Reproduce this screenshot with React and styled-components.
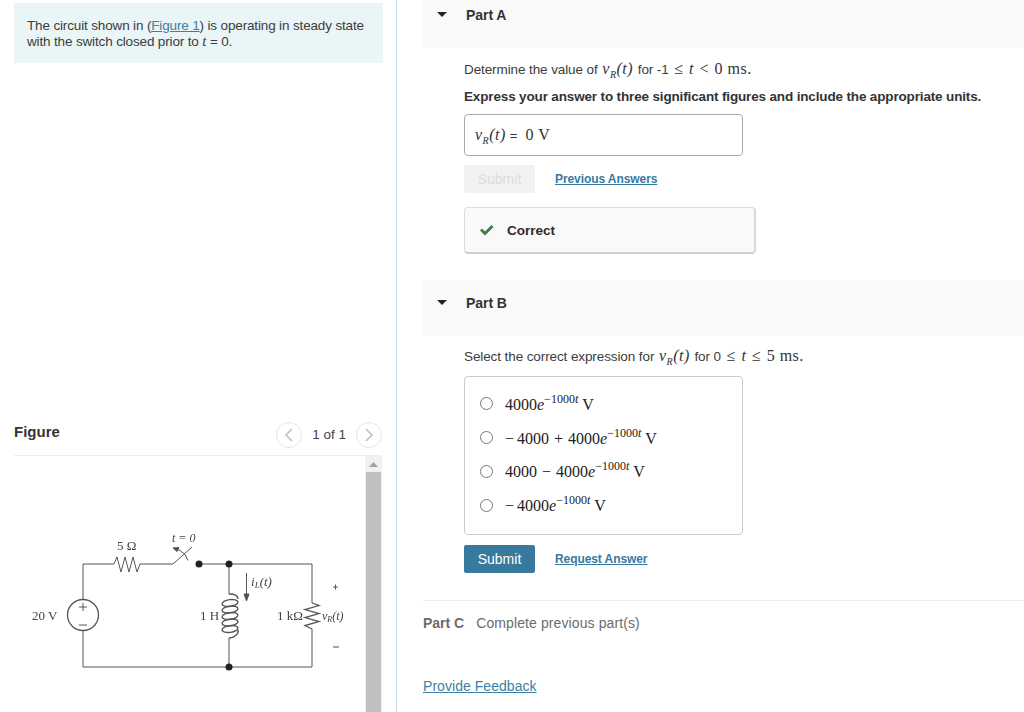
import React from 'react';
import styled, { createGlobalStyle } from 'styled-components';

const GlobalStyle = createGlobalStyle`
  html, body {
    margin: 0;
    padding: 0;
    background: #fff;
    height: 712px;
    overflow: hidden;
    font-family: "Liberation Sans", Arial, sans-serif;
    font-size: 14px;
    color: #333;
  }
`;

const Page = styled.div`
  display: grid;
  grid-template-columns: 397px 1fr;
  width: 1024px;
  height: 712px;
  overflow: hidden;
`;

const LeftPane = styled.div`
  border-right: 1px solid #c4d4e4;
  padding: 3px 14px 0 14px;
  box-sizing: border-box;
  height: 712px;
  overflow: hidden;
`;

const Intro = styled.div`
  background: #e9f5f6;
  height: 60px;
  width: 369px;
  box-sizing: border-box;
  padding: 14px 13px 0;
  line-height: 16px;
  font-size: 13.5px;
  letter-spacing: -0.15px;
  color: #3c3c3c;
  border-top: 1px solid #eef2f3;
`;

const FigureLink = styled.a`
  color: #3d7fa3;
  text-decoration: underline;
`;

const Ital = styled.i`
  font-family: "Liberation Serif", serif;
  font-size: 15px;
  line-height: 0;
`;

const FigureHead = styled.div`
  display: flex;
  align-items: center;
  justify-content: space-between;
  margin-top: 353px;
  height: 39px;
  border-bottom: 1px solid #eee;
`;

const FigureTitle = styled.div`
  font-weight: 700;
  font-size: 15px;
  color: #333;
  margin-bottom: 8px;
`;

const Pager = styled.div`
  display: flex;
  align-items: center;
  gap: 10px;
  margin-bottom: 2px;
`;

const PagerBtn = styled.span`
  width: 26px;
  height: 26px;
  border-radius: 50%;
  border: 1px solid #e6e6e6;
  display: flex;
  align-items: center;
  justify-content: center;
  box-sizing: border-box;
`;

const PagerText = styled.span`
  font-size: 13.5px;
  color: #444;
`;

const FigureBody = styled.div`
  display: flex;
  height: 256px;
`;

const CircuitWrap = styled.div`
  flex: 1;
  padding-top: 75px;
  filter: blur(0.4px);
`;

const Scrollbar = styled.div`
  width: 17px;
  background: #f1f1f1;
  display: flex;
  flex-direction: column;
  align-items: center;
`;

const ScrollArrow = styled.div`
  height: 16px;
  display: flex;
  align-items: center;
  justify-content: center;
`;

const ScrollThumb = styled.div`
  width: 15px;
  flex: 1;
  background: #bfbfbf;
`;

const RightPane = styled.div`
  padding-left: 26px;
  overflow: hidden;
`;

const PartHead = styled.div`
  display: flex;
  align-items: flex-start;
  background: #f9f9f9;
  height: ${p => p.$h}px;
  box-sizing: border-box;
  padding: ${p => p.$pt}px 0 0 14px;
  margin-top: ${p => p.$mt || 0}px;
  font-weight: 700;
  font-size: 14px;
  letter-spacing: -0.05px;
  color: #333;
  gap: 19px;
`;

const Caret = styled.span`
  width: 0;
  height: 0;
  border-left: 5px solid transparent;
  border-right: 5px solid transparent;
  border-top: 5px solid #222;
  margin-top: 5px;
`;

const PartBody = styled.div`
  padding-left: 41px;
`;

const Prompt = styled.div`
  font-size: 13.5px;
  line-height: 18px;
  color: #3c3c3c;
  margin-top: ${p => p.$mt}px;
  letter-spacing: -0.1px;
`;

const Instruction = styled.div`
  font-weight: 700;
  font-size: 13.5px;
  line-height: 18px;
  color: #333;
  margin-top: 9px;
  letter-spacing: -0.15px;
`;

const MathText = styled.span`
  font-family: "Liberation Serif", serif;
  font-size: 16px;
  color: #333;
  letter-spacing: 0.5px;
  margin: 0 1px;
`;

const MathVar = styled.i`
  font-family: "Liberation Serif", serif;
`;

const RelOp = styled.span`
  margin: 0 1px;
`;

const Sub = styled.sub`
  font-size: 10px;
  font-style: italic;
  line-height: 0;
`;

const Sup = styled.sup`
  font-size: 12px;
  font-style: normal;
  line-height: 0;
  vertical-align: 7px;
  margin-right: 4px;
`;

const Op = styled.span`
  margin: 0 5px;
`;

const Minus = styled.span`
  margin-right: 3px;
`;

const AnswerBox = styled.div`
  width: 279px;
  height: 42px;
  box-sizing: border-box;
  margin-top: 8px;
  border: 1px solid #aaa;
  border-radius: 4px;
  display: flex;
  align-items: center;
  padding-left: 9px;
  gap: 3px;
`;

const Eq = styled.span`
  font-size: 13px;
  margin-right: 4px;
`;

const ActionRow = styled.div`
  display: flex;
  align-items: center;
  gap: 20px;
  margin-top: ${p => p.$mt}px;
`;

const SubmitBtn = styled.button`
  border: 0;
  border-radius: 2px;
  font-family: inherit;
  font-size: 14px;
  height: 28px;
  width: 71px;
  padding: 0;
  background: ${p => (p.$active ? '#387a9e' : '#f2f2f2')};
  color: ${p => (p.$active ? '#fff' : '#dcdcdc')};
`;

const ActionLink = styled.a`
  font-weight: 700;
  font-size: 12px;
  letter-spacing: -0.08px;
  color: #38799f;
  text-decoration: underline;
`;

const Feedback = styled.div`
  width: 292px;
  height: 47px;
  box-sizing: border-box;
  margin-top: 14px;
  border: 1px solid #ddd;
  border-bottom: 2px solid #cfcfcf;
  border-right: 2px solid #d8d8d8;
  border-radius: 4px;
  background: #f9f9f9;
  display: flex;
  align-items: center;
  padding-left: 14px;
  gap: 13px;
  font-weight: 700;
  font-size: 13.5px;
  color: #2c2c2c;
`;

const ChoiceBox = styled.div`
  width: 279px;
  height: 159px;
  box-sizing: border-box;
  margin-top: 10px;
  border: 1px solid #ccc;
  border-radius: 4px;
  padding-top: 11px;
`;

const Choice = styled.div`
  display: flex;
  align-items: center;
  height: 33.8px;
  padding-left: 15px;
  gap: 12px;
`;

const Radio = styled.span`
  width: 13px;
  height: 13px;
  box-sizing: border-box;
  border: 1.5px solid #777;
  border-radius: 50%;
  flex: none;
  background: #fff;
  position: relative;
  top: -1px;
`;

const ChoiceMath = styled.span`
  font-family: "Liberation Serif", serif;
  font-size: 16px;
  color: #222;
`;

const PartC = styled.div`
  border-top: 1px solid #eee;
  margin-top: 27px;
  height: 44px;
  display: flex;
  align-items: center;
  gap: 12px;
  font-size: 14px;
  letter-spacing: 0.1px;
  color: #6c6c6c;
`;

const PartCLabel = styled.b`
  font-size: 14px;
  letter-spacing: 0;
`;

const ProvideLink = styled.a`
  display: inline-block;
  margin-top: 33px;
  color: #3d7fa3;
  font-size: 14px;
  letter-spacing: 0.05px;
  text-decoration: underline;
`;

const Circuit = () => (
  <svg width="351" height="140" viewBox="14 530 351 140" fill="none" style={{ display: 'block', overflow: 'visible' }}>
    <g stroke="#555" strokeWidth="1">
      <path d="M83 598V563H114l3-7 4 15 4-15 4 15 4-15 4 15 3-8H173l19-17M199 563H312V602M83 630V666H312V628" />
      <path d="M229 563V593M229 637V666" />
      <path d="M312 602l7 2.5-14 4 14 4-14 4 14 4-14 4 7 3.5" strokeWidth="1.3" />
      <path d="M173 547l7 2.5 5 4 3 6" />
      <path d="M173 547l6-.5-2 4z" fill="#555" />
      <path d="M246.500 572V598" />
      <path d="M244 593l2.500 7 2.500-7z" fill="#555" />
      <g strokeWidth="1.4">
        <path d="M229 593c5 0 9 1 9 5" />
        <ellipse cx="230" cy="602" rx="8" ry="3.4" transform="rotate(-8 230 602)" />
        <ellipse cx="230" cy="608.500" rx="8" ry="3.4" transform="rotate(-8 230 608.500)" />
        <ellipse cx="230" cy="615" rx="8" ry="3.4" transform="rotate(-8 230 615)" />
        <ellipse cx="230" cy="621.500" rx="8" ry="3.4" transform="rotate(-8 230 621.500)" />
        <ellipse cx="230" cy="628" rx="8" ry="3.4" transform="rotate(-8 230 628)" />
        <path d="M238 629c1 4-4 8-9 8" />
      </g>
      <circle cx="83" cy="614" r="15.500" strokeWidth="1.3" fill="#fff" />
      <path d="M79 606h8M83 602v8M79 624h8" />
      <path d="M333 586h5M335.500 583.500v5M333 646h6" />
    </g>
    <circle cx="199" cy="563" r="3.500" fill="#222" />
    <circle cx="229" cy="563" r="3.500" fill="#222" />
    <circle cx="229" cy="666" r="3.500" fill="#222" />
    <g fill="#444" fontFamily="Liberation Serif, serif" fontSize="13">
      <text x="117" y="549">5 Ω</text>
      <text x="172" y="541" fontStyle="italic" fontSize="12">t = 0</text>
      <text x="32" y="619">20 V</text>
      <text x="200" y="619">1 H</text>
      <text x="277" y="619">1 kΩ</text>
      <text x="251" y="585" fontStyle="italic">i<tspan fontSize="9" dy="2">L</tspan><tspan dy="-2">(t)</tspan></text>
      <text x="322" y="619" fontStyle="italic" fontSize="12">v<tspan fontSize="8" dy="2">R</tspan><tspan dy="-2">(t)</tspan></text>
    </g>
  </svg>
);

const VR = () => (
  <MathVar>v<Sub>R</Sub>(t)</MathVar>
);

const App = () => (
  <Page>
    <GlobalStyle />
    <LeftPane>
      <Intro>
        The circuit shown in (<FigureLink href="#">Figure 1</FigureLink>) is operating in steady state
        <br />
        with the switch closed prior to <Ital>t</Ital> = 0.
      </Intro>
      <FigureHead>
        <FigureTitle>Figure</FigureTitle>
        <Pager>
          <PagerBtn>
            <svg width="8" height="14" viewBox="0 0 8 14" fill="none" stroke="#bbb" strokeWidth="1.5"><path d="M7 1L1 7l6 6" /></svg>
          </PagerBtn>
          <PagerText>1 of 1</PagerText>
          <PagerBtn>
            <svg width="8" height="14" viewBox="0 0 8 14" fill="none" stroke="#bbb" strokeWidth="1.5"><path d="M1 1l6 6-6 6" /></svg>
          </PagerBtn>
        </Pager>
      </FigureHead>
      <FigureBody>
        <CircuitWrap>
          <Circuit />
        </CircuitWrap>
        <Scrollbar>
          <ScrollArrow>
            <svg width="9" height="5" viewBox="0 0 9 5"><path d="M4.500 0L9 5H0z" fill="#a3a3a3" /></svg>
          </ScrollArrow>
          <ScrollThumb />
        </Scrollbar>
      </FigureBody>
    </LeftPane>

    <RightPane>
      <PartHead $h={48} $pt={7}>
        <Caret />
        Part A
      </PartHead>
      <PartBody>
        <Prompt $mt={12}>
          Determine the value of <MathText><VR /></MathText> for -1 <MathText><RelOp>≤</RelOp> <MathVar>t</MathVar> <RelOp>&lt;</RelOp> 0 ms.</MathText>
        </Prompt>
        <Instruction>Express your answer to three significant figures and include the appropriate units.</Instruction>
        <AnswerBox>
          <MathText><VR /></MathText>
          <Eq>=</Eq>
          <MathText>0 V</MathText>
        </AnswerBox>
        <ActionRow $mt={9}>
          <SubmitBtn disabled>Submit</SubmitBtn>
          <ActionLink href="#">Previous Answers</ActionLink>
        </ActionRow>
        <Feedback>
          <svg width="15" height="12" viewBox="0 0 15 12"><path d="M1 6.500l2-2 3 3L12.500 1l2 2L6 11.500z" fill="#3a7d44" /></svg>
          Correct
        </Feedback>
      </PartBody>

      <PartHead $h={56} $pt={15} $mt={26}>
        <Caret />
        Part B
      </PartHead>
      <PartBody>
        <Prompt $mt={11}>
          Select the correct expression for <MathText><VR /></MathText> for 0 <MathText><RelOp>≤</RelOp> <MathVar>t</MathVar> <RelOp>≤</RelOp> 5 ms.</MathText>
        </Prompt>
        <ChoiceBox>
          <Choice><Radio /><ChoiceMath>4000<i>e</i><Sup>−1000<i>t</i></Sup>V</ChoiceMath></Choice>
          <Choice><Radio /><ChoiceMath><Minus>−</Minus>4000<Op>+</Op>4000<i>e</i><Sup>−1000<i>t</i></Sup>V</ChoiceMath></Choice>
          <Choice><Radio /><ChoiceMath>4000<Op>−</Op>4000<i>e</i><Sup>−1000<i>t</i></Sup>V</ChoiceMath></Choice>
          <Choice><Radio /><ChoiceMath><Minus>−</Minus>4000<i>e</i><Sup>−1000<i>t</i></Sup>V</ChoiceMath></Choice>
        </ChoiceBox>
        <ActionRow $mt={10}>
          <SubmitBtn $active>Submit</SubmitBtn>
          <ActionLink href="#">Request Answer</ActionLink>
        </ActionRow>
      </PartBody>

      <PartC>
        <PartCLabel>Part C</PartCLabel>
        Complete previous part(s)
      </PartC>
      <ProvideLink href="#">Provide Feedback</ProvideLink>
    </RightPane>
  </Page>
);

export default App;
